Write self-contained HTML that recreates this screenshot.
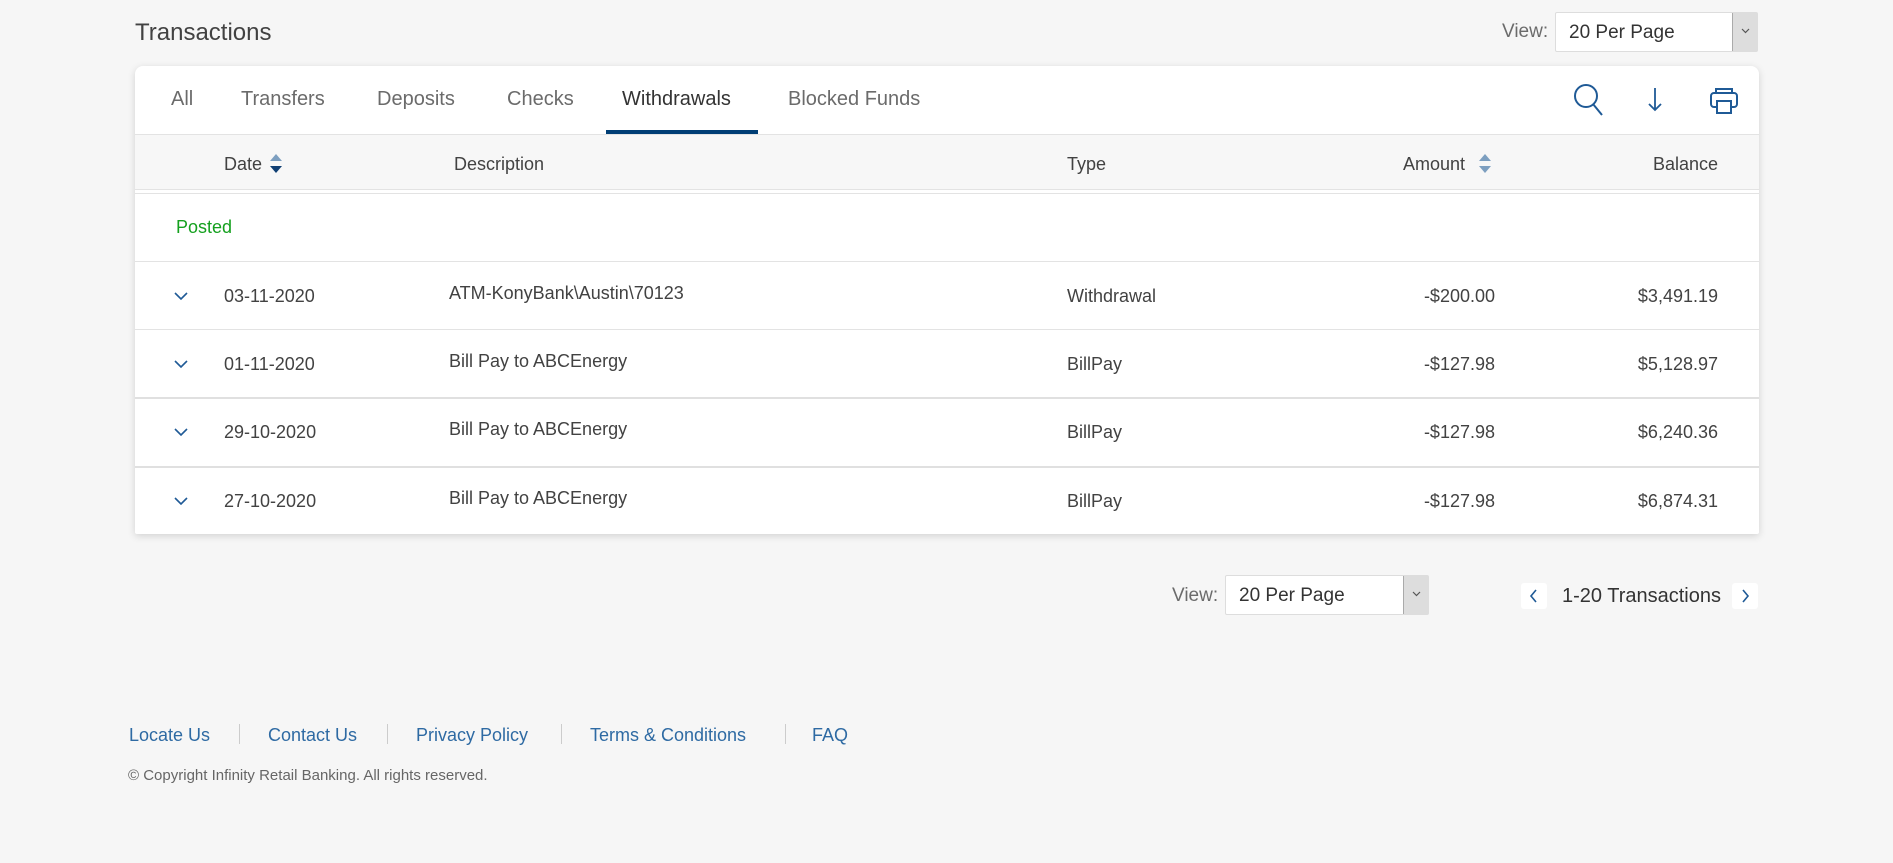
<!DOCTYPE html>
<html><head><meta charset="utf-8"><style>
*{margin:0;padding:0;box-sizing:border-box}
body{width:1893px;height:863px;background:#f6f6f6;font-family:"Liberation Sans",sans-serif;color:#424242;position:relative;overflow:hidden}
.a{position:absolute;white-space:nowrap}
.card{position:absolute;left:135px;top:66px;width:1624px;height:468px;background:#fff;border-radius:8px 8px 2px 2px;box-shadow:0 2px 8px rgba(0,0,0,.15);overflow:hidden}
.tab{position:absolute;top:22px;font-size:20px;color:#6b6b6b}
.hdr{position:absolute;left:0;top:68px;width:1624px;height:56px;background:#f7f7f7;border-top:1px solid #e3e3e3;border-bottom:1px solid #e3e3e3}
.h{position:absolute;top:19px;font-size:18px;color:#424242}
.row{position:absolute;left:0;width:1624px;height:68px;border-top:1px solid #e3e3e3}
.c{position:absolute;top:24px;font-size:18px;color:#424242}
.r{text-align:right}
.sel{position:absolute;background:#fff;border:1px solid #ddd;border-radius:2px;font-size:19px;color:#333}
.sel span{position:absolute;left:13px;top:9px}
.sel i{position:absolute;right:0;top:0;bottom:0;width:25px;background:#ddd;border-left:1px solid #aaa}
.lnk{position:absolute;top:725px;font-size:18px;color:#2e6aa3}
.sep{position:absolute;top:724px;width:1px;height:20px;background:#ccc}
</style></head><body>
<div class="a" style="left:135px;top:19px;font-size:24px;color:#424242">Transactions</div>
<div class="a" style="left:1502px;top:21px;font-size:19px;color:#6b6b6b">View:</div>
<div class="sel" style="left:1555px;top:12px;width:203px;height:40px"><span>20 Per Page</span><i><svg width="25" height="38" viewBox="0 0 25 38"><path d="M9 16l3.5 3.5L16 16" fill="none" stroke="#555" stroke-width="1.2"/></svg></i></div>

<div class="card">
 <div class="tab" style="left:36px">All</div>
 <div class="tab" style="left:106px">Transfers</div>
 <div class="tab" style="left:242px">Deposits</div>
 <div class="tab" style="left:372px">Checks</div>
 <div class="tab" style="left:487px;color:#333">Withdrawals</div>
 <div class="tab" style="left:653px">Blocked Funds</div>
 <div style="position:absolute;left:471px;top:64px;width:152px;height:4px;background:#003e75"></div>
 <svg style="position:absolute;left:1437px;top:16px" width="36" height="38" viewBox="0 0 36 38"><circle cx="14" cy="14" r="11" fill="none" stroke="#1f5a96" stroke-width="2"/><path d="M21 22l9 11" stroke="#1f5a96" stroke-width="2"/></svg>
 <svg style="position:absolute;left:1510px;top:20px" width="20" height="30" viewBox="0 0 20 30"><path d="M10 2v22M4 18l6 6 6-6" fill="none" stroke="#1f5a96" stroke-width="1.8"/></svg>
 <svg style="position:absolute;left:1574px;top:20px" width="30" height="30" viewBox="0 0 30 30"><path d="M7 7V3h16v4" fill="none" stroke="#1f5a96" stroke-width="2"/><rect x="2" y="7" width="26" height="14" rx="3" fill="none" stroke="#1f5a96" stroke-width="2"/><rect x="8" y="15" width="14" height="12" fill="#fff" stroke="#1f5a96" stroke-width="2"/></svg>
 <div class="hdr">
  <div class="h" style="left:89px">Date</div>
  <svg style="position:absolute;left:134px;top:18px" width="14" height="22" viewBox="0 0 14 22"><path d="M7 1l6 7H1z" fill="#7d9fc0"/><path d="M7 20l6-7H1z" fill="#0f3f73"/></svg>
  <div class="h r" style="left:1235px;width:100px;left:1230px">Amount</div>
  <div class="h" style="left:319px">Description</div>
  <div class="h" style="left:932px">Type</div>
  <svg style="position:absolute;left:1343px;top:18px" width="14" height="22" viewBox="0 0 14 22"><path d="M7 1l6 7H1z" fill="#7d9fc0"/><path d="M7 20l6-7H1z" fill="#7d9fc0"/></svg>
  <div class="h r" style="left:1433px;width:150px">Balance</div>
 </div>
 <div style="position:absolute;left:0;top:127px;width:1624px;height:1px;background:#e3e3e3"></div>
 <div class="a" style="left:41px;top:151px;font-size:18px;color:#14a01e">Posted</div>

 <div class="row" style="top:195px">
  <svg style="position:absolute;left:38px;top:28px" width="16" height="12" viewBox="0 0 16 12"><path d="M2 3l6 6 6-6" fill="none" stroke="#1f5a96" stroke-width="1.6"/></svg>
  <div class="c" style="left:89px">03-11-2020</div><div class="c" style="left:314px;top:21px">ATM-KonyBank\Austin\70123</div>
  <div class="c" style="left:932px">Withdrawal</div><div class="c r" style="left:1160px;width:200px">-$200.00</div><div class="c r" style="left:1383px;width:200px">$3,491.19</div>
 </div>
 <div class="row" style="top:263px">
  <svg style="position:absolute;left:38px;top:28px" width="16" height="12" viewBox="0 0 16 12"><path d="M2 3l6 6 6-6" fill="none" stroke="#1f5a96" stroke-width="1.6"/></svg>
  <div class="c" style="left:89px">01-11-2020</div><div class="c" style="left:314px;top:21px">Bill Pay to ABCEnergy</div>
  <div class="c" style="left:932px">BillPay</div><div class="c r" style="left:1160px;width:200px">-$127.98</div><div class="c r" style="left:1383px;width:200px">$5,128.97</div>
 </div>
 <div class="row" style="top:331px;border-top:2px solid #e0e0e0">
  <svg style="position:absolute;left:38px;top:27px" width="16" height="12" viewBox="0 0 16 12"><path d="M2 3l6 6 6-6" fill="none" stroke="#1f5a96" stroke-width="1.6"/></svg>
  <div class="c" style="left:89px;top:23px">29-10-2020</div><div class="c" style="left:314px;top:20px">Bill Pay to ABCEnergy</div>
  <div class="c" style="left:932px;top:23px">BillPay</div><div class="c r" style="left:1160px;width:200px;top:23px">-$127.98</div><div class="c r" style="left:1383px;width:200px;top:23px">$6,240.36</div>
 </div>
 <div class="row" style="top:400px;border-top:2px solid #e0e0e0">
  <svg style="position:absolute;left:38px;top:27px" width="16" height="12" viewBox="0 0 16 12"><path d="M2 3l6 6 6-6" fill="none" stroke="#1f5a96" stroke-width="1.6"/></svg>
  <div class="c" style="left:89px;top:23px">27-10-2020</div><div class="c" style="left:314px;top:20px">Bill Pay to ABCEnergy</div>
  <div class="c" style="left:932px;top:23px">BillPay</div><div class="c r" style="left:1160px;width:200px;top:23px">-$127.98</div><div class="c r" style="left:1383px;width:200px;top:23px">$6,874.31</div>
 </div>
</div>

<div class="a" style="left:1172px;top:585px;font-size:19px;color:#6b6b6b">View:</div>
<div class="sel" style="left:1225px;top:575px;width:204px;height:40px"><span>20 Per Page</span><i><svg width="25" height="38" viewBox="0 0 25 38"><path d="M9 16l3.5 3.5L16 16" fill="none" stroke="#555" stroke-width="1.2"/></svg></i></div>
<div class="a" style="left:1521px;top:583px;width:26px;height:26px;background:#fff;border-radius:3px"><svg width="26" height="26" viewBox="0 0 26 26"><path d="M15 7l-5 6 5 6" fill="none" stroke="#1f5a96" stroke-width="1.6"/></svg></div>
<div class="a" style="left:1562px;top:585px;font-size:20px;color:#333">1-20 Transactions</div>
<div class="a" style="left:1732px;top:583px;width:26px;height:26px;background:#fff;border-radius:3px"><svg width="26" height="26" viewBox="0 0 26 26"><path d="M11 7l5 6-5 6" fill="none" stroke="#1f5a96" stroke-width="1.6"/></svg></div>

<div class="lnk" style="left:129px">Locate Us</div><div class="sep" style="left:239px"></div>
<div class="lnk" style="left:268px">Contact Us</div><div class="sep" style="left:387px"></div>
<div class="lnk" style="left:416px">Privacy Policy</div><div class="sep" style="left:561px"></div>
<div class="lnk" style="left:590px">Terms &amp; Conditions</div><div class="sep" style="left:785px"></div>
<div class="lnk" style="left:812px">FAQ</div>
<div class="a" style="left:128px;top:767px;font-size:15px;color:#666">© Copyright Infinity Retail Banking. All rights reserved.</div>
</body></html>
